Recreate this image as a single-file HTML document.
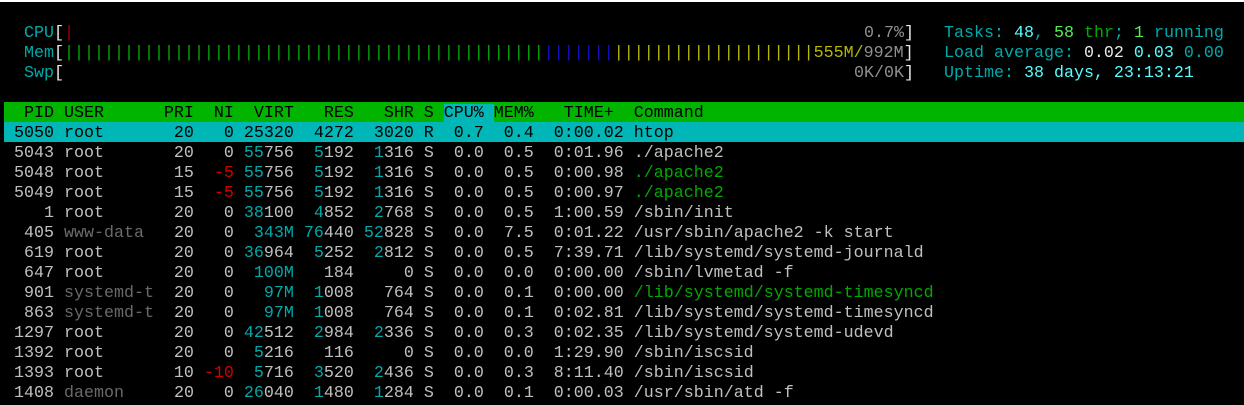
<!DOCTYPE html>
<html><head><meta charset="utf-8"><style>
html,body{margin:0;padding:0;background:#000;width:1244px;height:405px;overflow:hidden}
#top{position:absolute;left:0;top:0;width:1244px;height:2px;background:#fff}
.l{position:absolute;left:4px;height:18px;padding-top:2px;width:1240px;white-space:pre;font-family:"Liberation Mono",monospace;font-size:16.667px;line-height:20px;color:#c0c0c0}
.a{position:absolute;top:2px}
.c{color:#00aaaa}.C{color:#55ffff}.d{color:#6a6a6a}.r{color:#d00000}.g{color:#00aa00}.G{color:#55ee55}
.w{color:#e8e8e8}.y{color:#b8b800}.b{color:#1010d0}.k{color:#909090}.R{color:#a00000}
.hd{background:#00b400;color:#000}.sel{background:#00b6b6;color:#000}
.hc{background:#00b6b6}
</style></head><body>
<div id="top"></div>
<div class="l" style="top:22px"><span class="a" style="left:20px"><span class="c">CPU</span><span class="w">[</span><span class="R">|</span></span><span class="a k" style="left:860px">0.7%<span class="w">]</span></span><span class="a c" style="left:940px">Tasks: <span class="C">48</span>, <span class="G">58</span><span class="g"> thr</span>; <span class="G">1</span> running</span></div>
<div class="l" style="top:42px"><span class="a" style="left:20px"><span class="c">Mem</span><span class="w">[</span><span class="g">||||||||||||||||||||||||||||||||||||||||||||||||</span><span class="b">|||||||</span><span class="y">||||||||||||||||||||555M/</span><span class="k">992M</span><span class="w">]</span></span><span class="a c" style="left:940px">Load average: <span class="w">0.02</span> <span class="C">0.03</span> 0.00</span></div>
<div class="l" style="top:62px"><span class="a" style="left:20px"><span class="c">Swp</span><span class="w">[</span></span><span class="a k" style="left:850px">0K/0K<span class="w">]</span></span><span class="a c" style="left:940px">Uptime: <span class="C">38 days, 23:13:21</span></span></div>
<div class="l hd" style="top:102px">  PID USER      PRI  NI  VIRT   RES   SHR S <span class="hc">CPU% </span>MEM%   TIME+  Command</div>
<div class="l sel" style="top:122px"> 5050 root       20   0 25320  4272  3020 R  0.7  0.4  0:00.02 htop</div>
<div class="l" style="top:142px"> 5043 root       20   0 <span class="c">55</span>756  <span class="c">5</span>192  <span class="c">1</span>316 S  0.0  0.5  0:01.96 ./apache2</div>
<div class="l" style="top:162px"> 5048 root       15  <span class="r">-5</span> <span class="c">55</span>756  <span class="c">5</span>192  <span class="c">1</span>316 S  0.0  0.5  0:00.98 <span class="g">./apache2</span></div>
<div class="l" style="top:182px"> 5049 root       15  <span class="r">-5</span> <span class="c">55</span>756  <span class="c">5</span>192  <span class="c">1</span>316 S  0.0  0.5  0:00.97 <span class="g">./apache2</span></div>
<div class="l" style="top:202px">    1 root       20   0 <span class="c">38</span>100  <span class="c">4</span>852  <span class="c">2</span>768 S  0.0  0.5  1:00.59 /sbin/init</div>
<div class="l" style="top:222px">  405 <span class="d">www-data</span>   20   0  <span class="c">343M</span> <span class="c">76</span>440 <span class="c">52</span>828 S  0.0  7.5  0:01.22 /usr/sbin/apache2 -k start</div>
<div class="l" style="top:242px">  619 root       20   0 <span class="c">36</span>964  <span class="c">5</span>252  <span class="c">2</span>812 S  0.0  0.5  7:39.71 /lib/systemd/systemd-journald</div>
<div class="l" style="top:262px">  647 root       20   0  <span class="c">100M</span>   184     0 S  0.0  0.0  0:00.00 /sbin/lvmetad -f</div>
<div class="l" style="top:282px">  901 <span class="d">systemd-t</span>  20   0   <span class="c">97M</span>  <span class="c">1</span>008   764 S  0.0  0.1  0:00.00 <span class="g">/lib/systemd/systemd-timesyncd</span></div>
<div class="l" style="top:302px">  863 <span class="d">systemd-t</span>  20   0   <span class="c">97M</span>  <span class="c">1</span>008   764 S  0.0  0.1  0:02.81 /lib/systemd/systemd-timesyncd</div>
<div class="l" style="top:322px"> 1297 root       20   0 <span class="c">42</span>512  <span class="c">2</span>984  <span class="c">2</span>336 S  0.0  0.3  0:02.35 /lib/systemd/systemd-udevd</div>
<div class="l" style="top:342px"> 1392 root       20   0  <span class="c">5</span>216   116     0 S  0.0  0.0  1:29.90 /sbin/iscsid</div>
<div class="l" style="top:362px"> 1393 root       10 <span class="r">-10</span>  <span class="c">5</span>716  <span class="c">3</span>520  <span class="c">2</span>436 S  0.0  0.3  8:11.40 /sbin/iscsid</div>
<div class="l" style="top:382px"> 1408 <span class="d">daemon</span>     20   0 <span class="c">26</span>040  <span class="c">1</span>480  <span class="c">1</span>284 S  0.0  0.1  0:00.03 /usr/sbin/atd -f</div>
</body></html>
